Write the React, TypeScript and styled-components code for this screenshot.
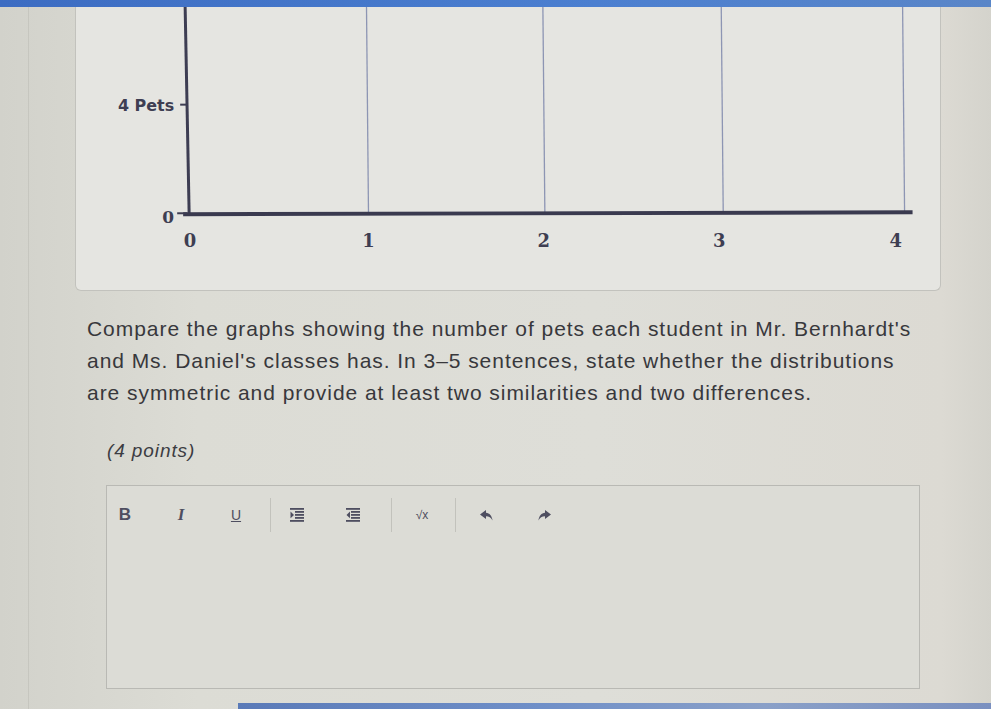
import styled, { createGlobalStyle } from 'styled-components'

const GlobalStyle = createGlobalStyle`
  html, body {
    margin: 0;
    padding: 0;
    background: #d7d7d0;
  }
  #root {
    width: 991px;
    height: 709px;
    overflow: hidden;
  }
`

const Page = styled.div`
  position: relative;
  width: 991px;
  height: 709px;
  display: flex;
  flex-direction: column;
  background: linear-gradient(90deg, #d2d2cb 0%, #dcdcd5 20%, #deded8 60%, #dcdad3 95%, #d4d3cc 100%);
  font-family: 'Liberation Sans', Arial, sans-serif;
  overflow: hidden;
`

const TopBar = styled.div`
  height: 7px;
  flex: none;
  background: linear-gradient(90deg, #3c6cc2, #4b7fd0 60%, #5a86c8);
`

const Body = styled.div`
  flex: 1;
  display: flex;
  padding-left: 28px;
`

const Gutter = styled.div`
  flex: 1;
  display: flex;
  flex-direction: column;
  border-left: 1px solid #c6c6bf;
  padding-left: 46px;
  padding-right: 50px;
`

const ChartCard = styled.div`
  height: 284px;
  flex: none;
  border: 1px solid #c2c2bd;
  border-top: none;
  border-radius: 0 0 6px 6px;
  background: #e5e5e1;
  box-sizing: border-box;
`

const ChartSvg = styled.svg`
  display: block;
  width: 100%;
  height: 100%;
`

const Prompt = styled.p`
  margin: 22px 0 0 12px;
  width: 838px;
  font-size: 21px;
  letter-spacing: 0.95px;
  line-height: 32px;
  color: #38383c;
`

const Points = styled.p`
  margin: 31px 0 0 32px;
  font-size: 19px;
  letter-spacing: 0.9px;
  font-style: italic;
  color: #3c3c42;
`

const Editor = styled.div`
  margin: 23px 0 0 31px;
  width: 814px;
  height: 204px;
  border: 1px solid #b9b9b4;
  box-sizing: border-box;
  background: #dcdcd6;
`

const Toolbar = styled.div`
  display: flex;
  align-items: center;
  height: 58px;
  color: #5a5a68;
`

const ToolButton = styled.div<{ $w: number }>`
  width: ${p => p.$w}px;
  height: 30px;
  display: flex;
  align-items: center;
  justify-content: center;
  font-size: 17px;
  color: #4e4e60;
`

const Separator = styled.div<{ $ml: number }>`
  width: 1px;
  height: 34px;
  background: #c2c2bc;
  margin-left: ${p => p.$ml}px;
`

const BottomBar = styled.div`
  position: absolute;
  left: 238px;
  right: 0;
  bottom: 0;
  height: 6px;
  background: linear-gradient(90deg, #5a7ab8, #6f8fc8 40%, #8aa0c8 70%, #7a90c0);
`

const gridXs = [367 - 76, 544 - 76, 723 - 76, 905 - 76]
const labels = [
  { x: 190 - 76, t: '0' },
  { x: 369 - 76, t: '1' },
  { x: 545 - 76, t: '2' },
  { x: 721 - 76, t: '3' },
  { x: 898 - 76, t: '4' },
]

function Chart () {
  const axisY = 214 - 7
  const yAxisX = 187 - 76
  return (
    <ChartSvg viewBox="0 0 866 284">
      {gridXs.map(x => (
        <line key={x} x1={x} y1={0} x2={x + 2} y2={axisY} stroke="#8d95b3" strokeWidth={1.3} />
      ))}
      <line x1={yAxisX - 2} y1={0} x2={yAxisX + 2} y2={axisY} stroke="#3d3d52" strokeWidth={3} />
      <line x1={yAxisX - 4} y1={axisY + 1} x2={915 - 76} y2={axisY - 1} stroke="#3a3a4f" strokeWidth={4} />
      <line x1={yAxisX - 7} y1={98} x2={yAxisX} y2={98} stroke="#3d3d52" strokeWidth={2} />
      <line x1={yAxisX - 10} y1={axisY} x2={yAxisX} y2={axisY} stroke="#3d3d52" strokeWidth={2} />
      <text x={174 - 76} y={104} textAnchor="end" fontFamily="'DejaVu Sans', Verdana, sans-serif" fontWeight="bold" fontSize={16} fill="#3e3e52">4 Pets</text>
      <text x={174 - 76} y={217} textAnchor="end" fontFamily="'DejaVu Serif', serif" fontWeight="bold" fontSize={17} fill="#3e3e52">0</text>
      {labels.map(l => (
        <text key={l.t} x={l.x} y={241} textAnchor="middle" fontFamily="'DejaVu Serif', serif" fontWeight="bold" fontSize={18} fill="#3e3e52">{l.t}</text>
      ))}
    </ChartSvg>
  )
}

function IndentIcon ({ out }: { out?: boolean }) {
  return (
    <svg width="14" height="14" viewBox="0 0 14 14" fill="#4e4e60">
      <rect x="0" y="0" width="14" height="1.8" />
      <rect x="5" y="3" width="9" height="1.8" />
      <rect x="5" y="6" width="9" height="1.8" />
      <rect x="5" y="9" width="9" height="1.8" />
      <rect x="0" y="12" width="14" height="1.8" />
      {out
        ? <path d="M4 3.5 L0.5 6.9 L4 10.3 Z" />
        : <path d="M0.5 3.5 L4 6.9 L0.5 10.3 Z" />}
    </svg>
  )
}

function ArrowIcon ({ redo }: { redo?: boolean }) {
  return (
    <svg width="13" height="11" viewBox="0 0 13 11" fill="#4e4e60" style={redo ? undefined : { transform: 'scaleX(-1)' }}>
      <path d="M7 0 L13 4.5 L7 9 L7 6.3 C4 6.3 2 7.5 0.5 10.5 C1 6 3.5 3 7 2.8 Z" />
    </svg>
  )
}

export default function App () {
  return (
    <>
      <GlobalStyle />
      <Page>
        <TopBar />
        <Body>
          <Gutter>
            <ChartCard>
              <Chart />
            </ChartCard>
            <Prompt>
              Compare the graphs showing the number of pets each student in Mr. Bernhardt's
              and Ms. Daniel's classes has. In 3–5 sentences, state whether the distributions
              are symmetric and provide at least two similarities and two differences.
            </Prompt>
            <Points>(4 points)</Points>
            <Editor>
              <Toolbar>
                <ToolButton $w={36}><b>B</b></ToolButton>
                <ToolButton $w={76}><i style={{ fontFamily: 'Liberation Serif, serif', fontWeight: 'bold' }}>I</i></ToolButton>
                <ToolButton $w={34}><u style={{ fontSize: 14 }}>U</u></ToolButton>
                <Separator $ml={17} />
                <ToolButton $w={52}><IndentIcon /></ToolButton>
                <ToolButton $w={60}><IndentIcon out /></ToolButton>
                <Separator $ml={8} />
                <ToolButton $w={60}><span style={{ fontSize: 12 }}>√x</span></ToolButton>
                <Separator $ml={3} />
                <ToolButton $w={60}><ArrowIcon /></ToolButton>
                <ToolButton $w={56}><ArrowIcon redo /></ToolButton>
              </Toolbar>
            </Editor>
          </Gutter>
        </Body>
        <BottomBar />
      </Page>
    </>
  )
}
